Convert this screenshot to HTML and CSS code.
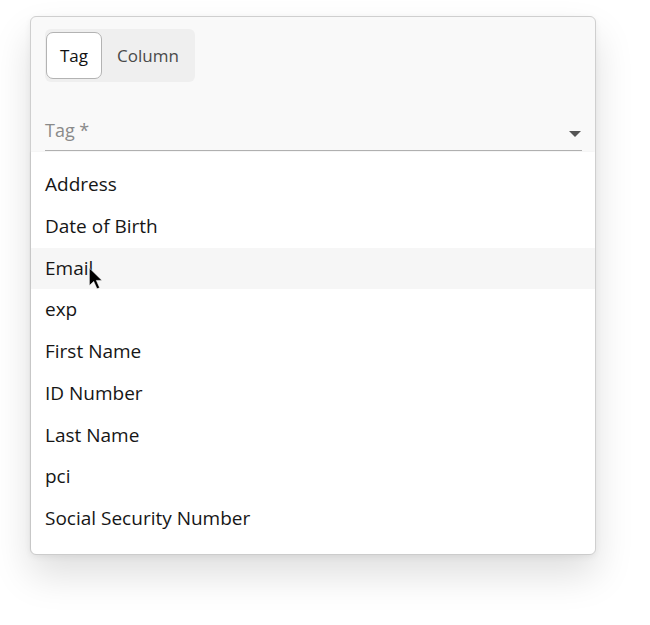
FILE: index.html
```html
<!DOCTYPE html>
<html lang="en">
<head>
<meta charset="utf-8">
<title>Tag picker</title>
<link rel="stylesheet" href="styles.css">
</head>
<body>
<div class="card">
  <div class="head">
    <div class="tabs">
      <button class="tab active">Tag</button>
      <button class="tab">Column</button>
    </div>
    <div class="field">
      <span class="label">Tag *</span>
      <span class="caret"></span>
    </div>
  </div>
  <ul class="menu">
    <li class="item">Address</li>
    <li class="item">Date of Birth</li>
    <li class="item hover">Email</li>
    <li class="item">exp</li>
    <li class="item">First Name</li>
    <li class="item">ID Number</li>
    <li class="item">Last Name</li>
    <li class="item">pci</li>
    <li class="item">Social Security Number</li>
  </ul>
  <svg class="cursor" width="18" height="24" viewBox="0 0 16 22"><path d="M1 1 L1 17 L5 13.2 L8 20 L10.4 19 L7.4 12.3 L12.6 12.3 Z" fill="#000" stroke="#fff" stroke-width="0.5"/></svg>
</div>
</body>
</html>
```

FILE: styles.css
```css
html, body {
  margin: 0;
  padding: 0;
  background: #ffffff;
}
body {
  min-height: 625px;
  box-sizing: border-box;
  padding: 16px 0 0 30px;
  font-family: "Open Sans", "Noto Sans", sans-serif;
}
.card {
  position: relative;
  width: 564px;
  background: #f9f9f9;
  border: 1px solid #cfcfcf;
  border-radius: 6px;
  box-shadow: 0 20px 38px rgba(0, 0, 0, 0.13), 0 2px 6px rgba(0, 0, 0, 0.06);
}
.head {
  padding: 12px 13px 1px 14px;
}
.tabs {
  display: inline-flex;
  background: #efefef;
  border-radius: 6px;
  padding: 3px 1px;
}
.tab {
  font-family: "Open Sans", "Noto Sans", sans-serif;
  font-size: 17px;
  height: 47px;
  padding: 0 14px;
  border: 1px solid transparent;
  border-radius: 7px;
  background: transparent;
  color: #4a4a4a;
  cursor: pointer;
}
.tab.active {
  background: #ffffff;
  border-color: #b3b3b3;
  color: #111111;
  padding: 0 13px;
}
.field {
  display: flex;
  justify-content: space-between;
  align-items: flex-start;
  margin-top: 36px;
  padding-bottom: 8px;
  border-bottom: 1px solid #b0b0b0;
}
.label {
  font-size: 18px;
  line-height: 24px;
  color: #8a8a8a;
}
.caret {
  width: 0;
  height: 0;
  margin: 13px 1px 0 0;
  border-left: 6.5px solid transparent;
  border-right: 6.5px solid transparent;
  border-top: 6px solid #555555;
}
.menu {
  list-style: none;
  margin: 0;
  padding: 12px 0 14px;
  background: #ffffff;
  border-radius: 0 0 6px 6px;
  box-shadow: -1px 0 2px rgba(0, 0, 0, 0.05);
}
.item {
  height: 41.75px;
  line-height: 41.75px;
  padding-left: 14px;
  font-size: 19px;
  color: #161616;
}
.item.hover {
  background: #f6f6f6;
}
.cursor {
  position: absolute;
  left: 57px;
  top: 250px;
}
```
